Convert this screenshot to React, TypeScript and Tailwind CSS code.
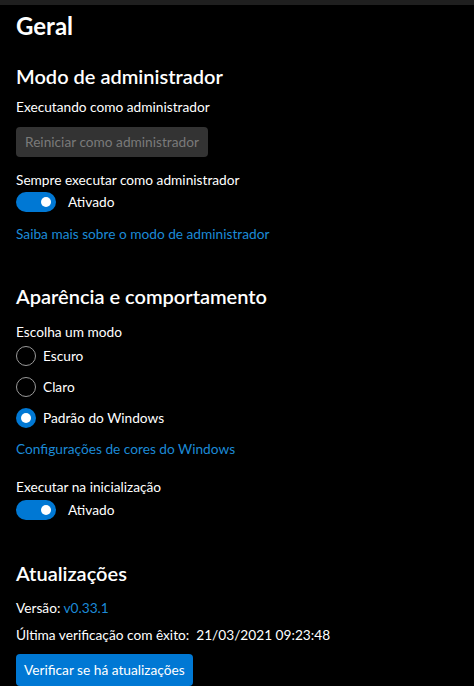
import React from 'react';

const Toggle: React.FC = () => (
  <div className="flex items-center gap-3 h-5">
    <div className="w-10 h-5 rounded-full bg-[#0078d4] flex items-center justify-end px-[5px]">
      <div className="w-[10px] h-[10px] rounded-full bg-white" />
    </div>
    <span className="text-[13.7px] text-white">Ativado</span>
  </div>
);

const Radio: React.FC<{ label: string; checked?: boolean }> = ({ label, checked }) => (
  <div className="flex items-center gap-[7px] h-5">
    {checked ? (
      <div className="w-5 h-5 rounded-full bg-[#0078d4] flex items-center justify-center">
        <div className="w-[10px] h-[10px] rounded-full bg-white" />
      </div>
    ) : (
      <div className="w-5 h-5 rounded-full border border-[#9a9a9a]" />
    )}
    <span className="text-[13.7px] text-white">{label}</span>
  </div>
);

export default function App() {
  return (
    <div
      className="w-[474px] h-[686px] overflow-hidden bg-black text-white"
      style={{ fontFamily: '"Segoe UI", Lato, "Noto Sans", sans-serif' }}
    >
      <div className="h-[5px] bg-[#1f1f1f]" />
      <div className="px-4 flex flex-col text-[13.7px]">
        <h1 className="text-[24px] font-bold leading-8 mt-[5px]">Geral</h1>

        <h2 className="text-[20px] font-semibold leading-7 mt-[20px]">Modo de administrador</h2>
        <p className="leading-5 mt-[7px]">Executando como administrador</p>
        <div className="mt-[10px]">
          <button className="h-[30px] px-[9px] rounded bg-[#333333] text-[#7a7a7a]">
            Reiniciar como administrador
          </button>
        </div>
        <p className="leading-5 mt-[13px]">Sempre executar como administrador</p>
        <div className="mt-[2px]">
          <Toggle />
        </div>
        <a className="leading-5 text-[#1c8ad6] mt-[12px]">Saiba mais sobre o modo de administrador</a>

        <h2 className="text-[20px] font-semibold leading-7 mt-[38px]">Aparência e comportamento</h2>
        <p className="leading-5 mt-[12px]">Escolha um modo</p>
        <div className="flex flex-col gap-[11px] mt-[4px]">
          <Radio label="Escuro" />
          <Radio label="Claro" />
          <Radio label="Padrão do Windows" checked />
        </div>
        <a className="leading-5 text-[#1c8ad6] mt-[11px]">Configurações de cores do Windows</a>
        <p className="leading-5 mt-[18px]">Executar na inicialização</p>
        <div className="mt-[3px]">
          <Toggle />
        </div>

        <h2 className="text-[20px] font-semibold leading-7 mt-[39px]">Atualizações</h2>
        <p className="leading-5 mt-[11px]">
          Versão: <span className="text-[#1c8ad6]">v0.33.1</span>
        </p>
        <p className="leading-5 mt-[7px]">Última verificação com êxito:&nbsp; 21/03/2021 09:23:48</p>
        <div className="mt-[9px]">
          <button className="h-[32px] px-2 rounded bg-[#0078d4] text-white">
            Verificar se há atualizações
          </button>
        </div>
      </div>
    </div>
  );
}
